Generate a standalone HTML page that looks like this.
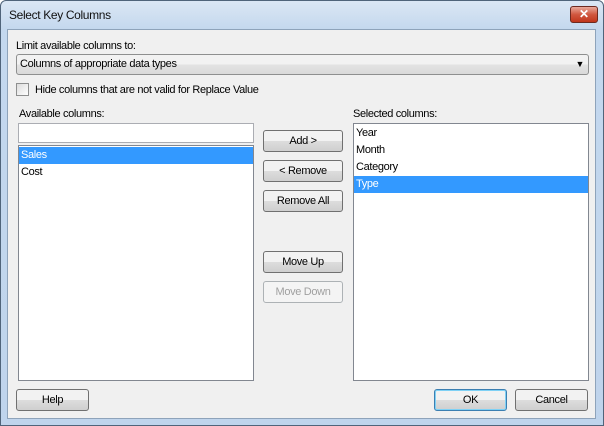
<!DOCTYPE html>
<html><head><style>
*{box-sizing:border-box}
body{margin:0;width:604px;height:426px;overflow:hidden;font-family:"Liberation Sans",sans-serif;font-size:11px;letter-spacing:-0.35px;color:#000}
.win{position:absolute;left:0;top:0;width:604px;height:426px;background:linear-gradient(#dbe7f4,#c4d8ee 28px,#bfd4ec);border:1px solid #50647a;border-radius:6px 6px 0 0}
.title{position:absolute;left:8px;top:7px;font-size:12px;color:#111}
.close{position:absolute;left:569px;top:5px;width:28px;height:17px;border:1px solid #6d2a20;border-radius:3px;background:linear-gradient(#e9a99b,#d0573f 50%,#c0361c);color:#fff;font-weight:bold;text-align:center;font-size:12px;line-height:15px;letter-spacing:0}
.client{position:absolute;left:7px;top:29px;width:589px;height:390px;background:#f0f0f0;border:1px solid #8ea3ba}
.a{position:absolute}
.lbl{position:absolute}
.box{position:absolute;background:#fff;border:1px solid #abadb3}
.btn{position:absolute;width:80px;height:22px;border:1px solid #707070;border-radius:3px;background:linear-gradient(#f2f2f2 50%,#dddddd 50%,#cfcfcf);text-align:center;line-height:20px}
.sel{background:#3399ff;color:#fff}
.item{height:17px;line-height:17px;padding-left:2px}
</style></head><body>
<div class="win">
<div class="title">Select Key Columns</div>
<div class="close">✕</div>
</div>
<div class="client"></div>
<div class="lbl" style="left:16px;top:40px">Limit available columns to:</div>
<div class="a" style="left:16px;top:54px;width:573px;height:21px;border:1px solid #8e8f8f;border-radius:3px;background:linear-gradient(#f2f2f2 50%,#e3e3e3 50%,#dadada);padding-left:3px;line-height:19px">Columns of appropriate data types<span style="position:absolute;right:4px;top:0;font-size:9px">▼</span></div>
<div class="a" style="left:16px;top:83px;width:13px;height:13px;border:1px solid #8e8f8f;background:linear-gradient(135deg,#dcdcdc,#fff)"></div>
<div class="lbl" style="left:35px;top:84px">Hide columns that are not valid for Replace Value</div>
<div class="lbl" style="left:19px;top:108px">Available columns:</div>
<div class="box" style="left:18px;top:123px;width:236px;height:20px"></div>
<div class="box" style="left:18px;top:145px;width:236px;height:236px;border-color:#828790;padding-top:1px">
<div class="item sel">Sales</div><div class="item">Cost</div></div>
<div class="lbl" style="left:353px;top:108px">Selected columns:</div>
<div class="box" style="left:353px;top:123px;width:236px;height:258px;border-color:#828790;padding-top:1px">
<div class="item">Year</div><div class="item">Month</div><div class="item">Category</div><div class="item sel">Type</div></div>
<div class="btn" style="left:263px;top:130px">Add &gt;</div>
<div class="btn" style="left:263px;top:160px">&lt; Remove</div>
<div class="btn" style="left:263px;top:190px">Remove All</div>
<div class="btn" style="left:263px;top:251px">Move Up</div>
<div class="btn" style="left:263px;top:281px;border-color:#adb2b5;background:#f4f4f4;color:#a0a0a0">Move Down</div>
<div class="btn" style="left:16px;top:389px;width:73px">Help</div>
<div class="btn" style="left:434px;top:389px;width:73px;border-color:#3c7fb1;box-shadow:inset 0 0 0 1px #7fd1f5">OK</div>
<div class="btn" style="left:515px;top:389px;width:73px">Cancel</div>
</body></html>
